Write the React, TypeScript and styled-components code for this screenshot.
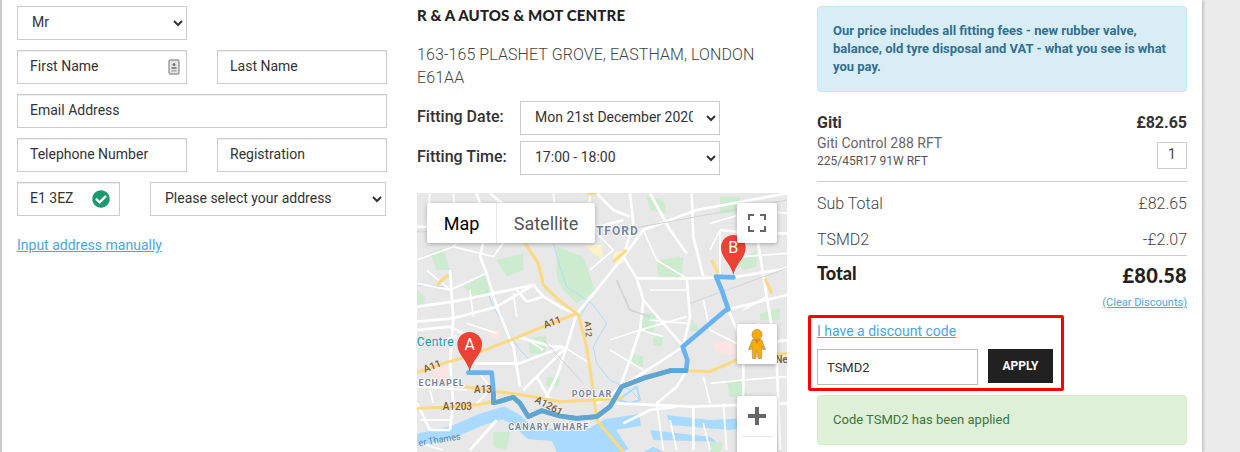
import React from "react";
import styled, { createGlobalStyle } from "styled-components";
import { FaCheckCircle } from "react-icons/fa";

const Global = createGlobalStyle`
  html, body { margin: 0; padding: 0; height: 452px; overflow: hidden; background: #ebebeb; }
  body { font-family: Roboto, "Liberation Sans", sans-serif; color: #333; }
  * { box-sizing: border-box; }
`;

const Page = styled.div`
  width: 1202px; height: 452px; overflow: hidden; background: #fff;
  border-left: 2px solid #ccc; box-shadow: 1px 0 3px rgba(0,0,0,.25);
  padding: 6px 15px 0; display: grid; grid-template-columns: repeat(3, 370px); column-gap: 30px;
`;
const Column = styled.div`display: flex; flex-direction: column; min-width: 0;`;
const FormRow = styled.div<{ $gap?: number }>`display: flex; gap: ${p => p.$gap ?? 30}px; margin-bottom: 10px;`;
const Field = styled.div<{ $w?: number }>`position: relative; width: ${p => (p.$w ? p.$w + "px" : "100%")};`;
const Input = styled.input`
  display: block; width: 100%; height: 34px; border: 1px solid #ccc; border-radius: 0; background: #fff;
  padding: 0 12px 2px; font: 400 14px Roboto, sans-serif; color: #333; outline: none;
  box-shadow: inset 0 1px 1px rgba(0,0,0,.075);
  &::placeholder { color: #333; opacity: 1; }
`;
const Select = styled.select<{ $w: number }>`
  display: block; width: ${p => p.$w}px; height: 34px; border: 1px solid #ccc; border-radius: 0; background: #fff;
  padding: 0 10px 2px; font: 400 14px Roboto, sans-serif; color: #333; outline: none;
`;
const ContactKey = styled.svg`position: absolute; right: 7px; top: 9px; width: 12px; height: 16px;`;
const CheckMark = styled.span`position: absolute; left: 75px; top: 8px; color: #1f9a6e; font-size: 18px; line-height: 18px; display: block;`;
const TextLink = styled.a<{ $size: number }>`color: #4ba6e0; text-decoration: underline; font-size: ${p => p.$size}px; font-weight: 400;`;
const ManualLink = styled.div`margin-top: 9px; line-height: 20px;`;

const Title = styled.h3`margin: -1px 0 0; font: 900 15px/20px Lato, sans-serif; color: #222; letter-spacing: .14px;`;
const Address = styled.p`margin: 18px 0 0; font: 300 16px/23px Roboto, sans-serif; color: #444; width: 360px; height: 46px; letter-spacing: .08px;`;
const FitRow = styled.div`display: flex; align-items: center; & + & { margin-top: 6px; }`;
const FitGroup = styled.div`margin-top: 12px; display: flex; flex-direction: column;`;
const FitLabel = styled.label`width: 103px; padding-bottom: 3px; font: 500 16px Roboto, sans-serif; color: #333;`;

const MapBox = styled.div`position: relative; width: 370px; height: 259px; margin-top: 18px; overflow: hidden; background: #e8e8e8;`;
const MapArt = styled.svg`display: block; width: 370px; height: 259px;`;
const MapTypes = styled.div`
  position: absolute; left: 10px; top: 10px; height: 40px; display: flex; background: #fff; border-radius: 2px;
  box-shadow: 0 1px 4px rgba(0,0,0,.3);
`;
const MapType = styled.div<{ $on?: boolean; $w: number }>`
  width: ${p => p.$w}px; display: flex; align-items: center; justify-content: center; font-size: 18px;
  color: ${p => (p.$on ? "#000" : "#565656")}; & + & { border-left: 1px solid #e6e6e6; }
`;
const MapButton = styled.div<{ $top: number; $h?: number }>`
  position: absolute; right: 10px; top: ${p => p.$top}px; width: 40px; height: ${p => p.$h ?? 40}px; background: #fff; border-radius: 2px;
  box-shadow: 0 1px 4px rgba(0,0,0,.3); display: flex; align-items: flex-start; justify-content: center; padding-top: 11px;
`;
const Divider = styled.div`position: absolute; left: 5px; right: 5px; top: 40px; height: 1px; background: #e6e6e6;`;

const Notice = styled.div`
  height: 86px; padding: 15px; border: 1px solid #bce8f1; border-radius: 4px; background: #d9edf7;
  color: #31708f; font: 700 13px/18px Roboto, sans-serif;
`;
const PriceRow = styled.div`display: flex; justify-content: space-between; align-items: center;`;
const ProductHead = styled(PriceRow)`margin-top: 21px; font: 700 16px/19px Roboto, sans-serif; color: #333;`;
const ProductBody = styled(PriceRow)`align-items: flex-start; padding-bottom: 12px; border-bottom: 1px solid #ccc;`;
const ProductName = styled.div`font: 400 14px/20px Roboto, sans-serif; color: #666; margin-top: 1px;`;
const ProductSize = styled.div`font: 400 12px/16px Roboto, sans-serif; color: #555;`;
const Qty = styled.div`width: 30px; height: 27px; border: 1px solid #ccc; font-size: 14px; display: flex; align-items: center; justify-content: center; color: #444; margin-top: 10px; padding-bottom: 3px;`;
const SumRow = styled(PriceRow)<{ $h: number }>`height: ${p => p.$h}px; font: 300 16px Roboto, sans-serif; color: #444;`;
const SumBlock = styled.div`border-bottom: 1px solid #ccc;`;
const TotalRow = styled(PriceRow)`height: 36px; margin-top: 1px;`;
const TotalLabel = styled.span`font: 900 18px Lato, sans-serif; color: #222; margin-top: -4px;`;
const TotalValue = styled.span`font: 900 20px Lato, sans-serif; color: #222; letter-spacing: .3px; margin-top: -1px;`;
const ClearRow = styled.div`text-align: right; line-height: 14px; margin-top: 1px;`;
const DiscountFrame = styled.div`
  width: 256px; height: 76px; margin: 5px 0 0 -9px; border: 3px solid #f00; border-radius: 2px; padding: 4px 0 0 6px;
`;
const DiscountLink = styled.div`line-height: 18px;`;
const DiscountRow = styled.div`display: flex; gap: 10px; margin-top: 9px; align-items: flex-start;`;
const DiscountInput = styled.input`
  width: 161px; height: 36px; border: 1px solid #bbb; padding: 0 9px; font: 400 13px Roboto, sans-serif; color: #333; outline: none; border-radius: 0;
`;
const ApplyButton = styled.button`
  width: 65px; height: 34px; border: 0; border-radius: 0; background: #212121; color: #fff; font: 700 12px Roboto, sans-serif; padding: 0;
`;
const Success = styled.div`
  margin-top: 4px; height: 50px; padding: 0 15px 1px; display: flex; align-items: center; border: 1px solid #d6e9c6; border-radius: 4px;
  background: #dff0d8; color: #3c763d; font: 400 13px Roboto, sans-serif;
`;

const roadsMajor = [
  "M21 395L130 385L260 350L370 285L400 320L450 350L500 372",
  "M21 350L130 335L250 310L370 285",
  "M230 250L260 350L310 470L330 590",
  "M120 240L130 385L120 520L130 640L120 720",
  "M500 372L560 300L640 200L700 120L860 60L1131 10",
  "M500 372L470 470L380 560L340 600",
  "M680 265L830 265L970 262L1131 235",
  "M640 200L680 265L700 330L690 420L660 510L630 590",
  "M830 265L840 380L820 470L650 580",
  "M820 470L700 330",
  "M955 358L1131 315",
  "M955 358L1000 470L1000 600L990 780",
  "M1040 130L1070 320L1100 500L1110 780",
  "M21 110L260 120L345 150L500 130L640 90",
  "M845 10L850 140L880 260",
  "M21 470L140 440",
  "M620 640L850 650L1131 640",
  "M850 650L850 780",
  "M190 520L330 520L460 470",
  "M260 690L180 780",
  "M21 640L60 720L120 720",
  "M380 560L420 630",
  "M660 10L670 100L640 200",
  "M200 10L230 110L210 200L230 250",
  "M320 300L350 335L400 320",
  "M21 420L120 410L180 440",
  "M320 440L430 470L460 470",
  "M240 10L300 60L345 100",
  "M560 10L610 60L660 80",
  "M720 10L780 120L830 190",
  "M1131 130L1040 130L930 120",
  "M630 590L600 620L560 640",
  "M740 640L800 590L830 542",
  "M1000 470L1131 450",
  "M640 700L720 660L800 650",
  "M400 640L440 560L470 470",
];
const roadsMinor = [
  "M130 170L250 200L300 130", "M50 240L120 300L230 250", "M540 240L610 180L560 130",
  "M700 120L740 210L830 265", "M930 120L930 260", "M1000 200L1131 190", "M600 450L690 420L830 380",
  "M600 480L700 540", "M880 330L900 420L1000 470", "M740 640L760 780", "M900 580L1000 570L1131 560",
  "M460 470L540 520", "M21 590L170 600", "M30 690L120 690", "M160 130L130 170",
  "M60 10L50 110", "M130 10L140 110", "M21 210L130 170", "M21 280L120 300", "M180 300L190 380", "M310 310L320 380",
  "M170 400L260 430", "M400 480L340 440", "M720 300L830 300", "M720 390L830 400", "M760 440L690 420",
  "M900 100L1040 60L1131 70", "M900 180L930 120", "M1070 320L1000 360", "M1040 400L1100 420", "M880 560L900 640",
  "M940 640L950 780", "M1040 640L1050 780", "M200 540L240 590", "M60 600L70 640", "M200 640L240 600",
  "M530 100L540 20", "M430 10L440 110", "M780 690L800 780", "M880 700L900 780", "M30 760L100 780",
];
const parks = [
  "M440 170L520 200L555 300L500 340L460 300L440 260Z", "M160 290L230 250L250 300L200 330Z", "M260 210L340 190L340 240L290 260Z",
  "M60 190L100 170L120 240L80 240Z", "M710 20L760 30L770 70L720 60Z", "M740 210L820 200L815 265L745 260Z",
  "M690 370L740 370L730 430L690 430Z", "M355 445L410 435L405 495L360 490Z", "M980 220L1040 180L1040 230L1000 240Z",
  "M1050 370L1110 355L1110 390L1050 390Z", "M930 20L990 20L990 70L930 70Z", "M950 570L1000 570L1010 620L960 620Z",
  "M410 560L450 560L445 590L410 590Z", "M660 490L700 500L700 530L665 525Z", "M845 390L870 420L840 425Z", "M250 725L300 725L290 780L250 770Z",
  "M21 300L45 320L40 345L21 345Z", "M730 440L760 440L755 470L730 465Z", "M900 750L940 760L930 786L900 786Z",
];

function MapDrawing() {
  return (
    <MapArt viewBox="21 9 1110 777" aria-hidden>
      <rect x="21" y="9" width="1110" height="777" fill="#e8e8e8" />
      <path d="M525 165L575 165L580 210L550 190Z" fill="#fdf3c8" />
      <path d="M610 190L650 180L640 220L615 225Z" fill="#fdf3c8" />
      <path d="M70 525L120 530L110 570L70 560Z" fill="#fbe4e1" />
      <path d="M240 420L270 420L265 445L240 445Z" fill="#fbe4e1" />
      <path d="M905 450L970 460L980 495L920 490Z" fill="#fbe4e1" />
      {parks.map((d, i) => <path key={i} d={d} fill="#cdeccf" />)}
      <g fill="none" stroke="#aedcff" strokeWidth="3" strokeLinejoin="round">
        <path d="M430 160L450 230L470 290L545 340L590 400L550 470L560 520L600 570L660 600L690 630" />
        <path d="M230 300L250 350L290 420L330 480L370 520" />
        <path d="M21 285L100 290" />
        <path d="M540 330L510 380" />
      </g>
      <g fill="none" stroke="#aadaff" strokeLinejoin="round">
        <path d="M21 750L130 725L210 690L280 668L320 690L360 730L430 735L540 735L590 705L690 690" strokeWidth="36" />
        <path d="M520 735L600 725L640 786" strokeWidth="36" />
        <path d="M625 630L680 590L690 630L660 640Z" strokeWidth="6" />
      </g>
      <path d="M770 675L900 690L1000 685L1090 690L1090 705L960 720L780 705Z" fill="#aadaff" />
      <path d="M720 720L900 740L920 755L730 750Z" fill="#aadaff" />
      <path d="M420 740L620 730L620 786L440 786Z" fill="#aadaff" />
      <path d="M730 770L760 786L700 786Z" fill="#aadaff" />
      <g fill="none" stroke="#fff" strokeWidth="8" strokeLinejoin="round">
        {roadsMajor.map((d, i) => <path key={i} d={d} />)}
      </g>
      <g fill="none" stroke="#fff" strokeWidth="5" strokeLinejoin="round">
        {roadsMinor.map((d, i) => <path key={i} d={d} />)}
      </g>
      <g fill="none" stroke="#d3d3d6" strokeWidth="3">
        <path d="M21 125L260 130L345 160L500 150L640 120L860 80L1131 30" />
        <path d="M620 270L660 360L720 380" strokeWidth="5" />
        <path d="M840 340L1131 235" />
        <path d="M400 450L520 580" />
      </g>
      <g fill="none" stroke="#fdd97f" strokeWidth="9" strokeLinejoin="round">
        <path d="M21 548L100 520L180 497L290 455L400 410L500 370" />
        <path d="M345 160L385 220L400 285L440 325L505 375L530 470L545 570L560 690L640 786" />
        <path d="M21 655L100 652L200 645L260 632" />
        <path d="M165 590L250 603L370 620L450 635L550 630L640 625" />
        <path d="M830 542L900 545L980 510L1131 490" />
        <path d="M530 10L560 10" />
        <path d="M610 215L650 180" />
        <path d="M1065 265L1085 310" />
        <path d="M905 210L925 250" />
        <path d="M80 285L115 255" />
      </g>
      <g fill="none" strokeLinejoin="round" strokeLinecap="round" strokeWidth="14">
        <path stroke="#69b4f0" d="M175 548L245 548L250 600L250 638L265 635L310 622L330 640L355 680L395 662L450 678L500 685L560 680L600 650L635 590L700 565L780 542L828 542L832 510L818 470L945 362L955 358L935 300L918 260L970 262" />
        <path stroke="#5fa5cf" d="M250 610L250 638L265 635L310 622L330 640L355 680L395 662L450 678L500 685L560 680L600 650L635 590L700 565L780 542L828 542" />
      </g>
      <g fontFamily="Roboto, sans-serif" fontWeight="500" textAnchor="middle">
        <g fill="#7c5a2d" fontSize="30">
          <text transform="translate(430 406) rotate(-20)">A11</text>
          <text transform="translate(70 538) rotate(-22)">A11</text>
          <text transform="translate(526 418) rotate(85)" fontSize="26">A12</text>
          <text x="219" y="609">A13</text>
          <text x="142" y="659">A1203</text>
          <text transform="translate(412 656) rotate(28)">A1261</text>
          <text x="1115" y="518">Ne</text>
        </g>
        <g fill="#78859b" fontSize="27" fontWeight="700" letterSpacing="3" paintOrder="stroke" stroke="#fff" strokeWidth="5">
          <text x="622" y="136" fontSize="36">TFORD</text>
          <text x="95" y="588">ECHAPEL</text>
          <text x="546" y="622">POPLAR</text>
          <text x="416" y="720">CANARY WHARF</text>
        </g>
        <text x="76" y="467" fontSize="36" fontWeight="400" fill="#129eaf" letterSpacing="1">Centre</text>
        <text transform="translate(90 758) rotate(-9)" fontSize="27" fontWeight="400" fill="#4c87b9">er Thames</text>
      </g>
      <path d="M179 545C172 510 142 495 142 463A37 37 0 0 1 216 463C216 495 186 510 179 545Z" fill="#ea4335" />
      <text x="179" y="480" fontFamily="Roboto, sans-serif" fontSize="48" fill="#fff" textAnchor="middle">A</text>
      <path d="M970 255C963 220 933 205 933 172A37 37 0 0 1 1007 172C1007 205 977 220 970 255Z" fill="#ea4335" />
      <text x="970" y="190" fontFamily="Roboto, sans-serif" fontSize="48" fill="#fff" textAnchor="middle">B</text>
    </MapArt>
  );
}

export default function App() {
  return (
    <>
      <Global />
      <Page>
        <Column>
          <FormRow><Select $w={170} defaultValue="Mr"><option>Mr</option></Select></FormRow>
          <FormRow>
            <Field $w={170}>
              <Input placeholder="First Name" />
              <ContactKey viewBox="0 0 12 16" aria-hidden>
                <rect x="1" y="1" width="10" height="14" rx="1.5" fill="#e4e4e4" stroke="#999" strokeWidth="1.4" />
                <circle cx="6" cy="5.5" r="1.5" fill="#777" />
                <rect x="3.5" y="8" width="5" height="2" fill="#888" />
                <rect x="3.5" y="11" width="5" height="1.5" fill="#aaa" />
              </ContactKey>
            </Field>
            <Field $w={170}><Input placeholder="Last Name" /></Field>
          </FormRow>
          <FormRow><Field><Input placeholder="Email Address" /></Field></FormRow>
          <FormRow>
            <Field $w={170}><Input placeholder="Telephone Number" /></Field>
            <Field $w={170}><Input placeholder="Registration" /></Field>
          </FormRow>
          <FormRow>
            <Field $w={103}>
              <Input defaultValue="E1 3EZ" />
              <CheckMark><FaCheckCircle /></CheckMark>
            </Field>
            <Select $w={236} defaultValue="p"><option value="p">Please select your address</option></Select>
          </FormRow>
          <ManualLink><TextLink $size={14} href="#">Input address manually</TextLink></ManualLink>
        </Column>

        <Column>
          <Title>R &amp; A AUTOS &amp; MOT CENTRE</Title>
          <Address>163-165 PLASHET GROVE, EASTHAM, LONDON E61AA</Address>
          <FitGroup>
            <FitRow>
              <FitLabel>Fitting Date:</FitLabel>
              <Select $w={200} defaultValue="d"><option value="d">Mon 21st December 2020</option></Select>
            </FitRow>
            <FitRow>
              <FitLabel>Fitting Time:</FitLabel>
              <Select $w={200} defaultValue="t"><option value="t">17:00 - 18:00</option></Select>
            </FitRow>
          </FitGroup>
          <MapBox>
            <MapDrawing />
            <MapTypes>
              <MapType $on $w={69}>Map</MapType>
              <MapType $w={99}>Satellite</MapType>
            </MapTypes>
            <MapButton $top={10}>
              <svg width="18" height="18" viewBox="0 0 18 18" aria-hidden>
                <path d="M0 6V0H6V2H2V6ZM12 0H18V6H16V2H12ZM18 12V18H12V16H16V12ZM6 18H0V12H2V16H6Z" fill="#666" />
              </svg>
            </MapButton>
            <MapButton $top={131}>
              <svg width="18" height="30" viewBox="0 0 18 30" aria-hidden style={{ marginTop: -6 }}>
                <circle cx="9" cy="5.6" r="5" fill="#f9ab00" stroke="#a8791d" strokeWidth=".6" />
                <path d="M4.5 10.5H13.5L17.5 20.5H15L14 17.5L13.5 29.5H10L9.3 21H8.7L8 29.5H4.5L4 17.5L3 20.5H.5Z" fill="#f9ab00" stroke="#8e8a80" strokeWidth=".6" />
                <path d="M6 11H12L9 14.5Z" fill="#e0802a" />
              </svg>
            </MapButton>
            <MapButton $top={203} $h={90}>
              <svg width="18" height="18" viewBox="0 0 18 18" aria-hidden>
                <path d="M7 0H11V7H18V11H11V18H7V11H0V7H7Z" fill="#666" />
              </svg>
              <Divider />
            </MapButton>
          </MapBox>
        </Column>

        <Column>
          <Notice>Our price includes all fitting fees - new rubber valve, balance, old tyre disposal and VAT - what you see is what you pay.</Notice>
          <ProductHead><span>Giti</span><span>£82.65</span></ProductHead>
          <ProductBody>
            <div>
              <ProductName>Giti Control 288 RFT</ProductName>
              <ProductSize>225/45R17 91W RFT</ProductSize>
            </div>
            <Qty>1</Qty>
          </ProductBody>
          <SumBlock>
            <SumRow $h={42}><span>Sub Total</span><span>£82.65</span></SumRow>
            <SumRow $h={31}><span>TSMD2</span><span>-£2.07</span></SumRow>
          </SumBlock>
          <TotalRow><TotalLabel>Total</TotalLabel><TotalValue>£80.58</TotalValue></TotalRow>
          <ClearRow><TextLink $size={11} href="#">(Clear Discounts)</TextLink></ClearRow>
          <DiscountFrame>
            <DiscountLink><TextLink $size={14} href="#">I have a discount code</TextLink></DiscountLink>
            <DiscountRow>
              <DiscountInput defaultValue="TSMD2" />
              <ApplyButton>APPLY</ApplyButton>
            </DiscountRow>
          </DiscountFrame>
          <Success>Code TSMD2 has been applied</Success>
        </Column>
      </Page>
    </>
  );
}
